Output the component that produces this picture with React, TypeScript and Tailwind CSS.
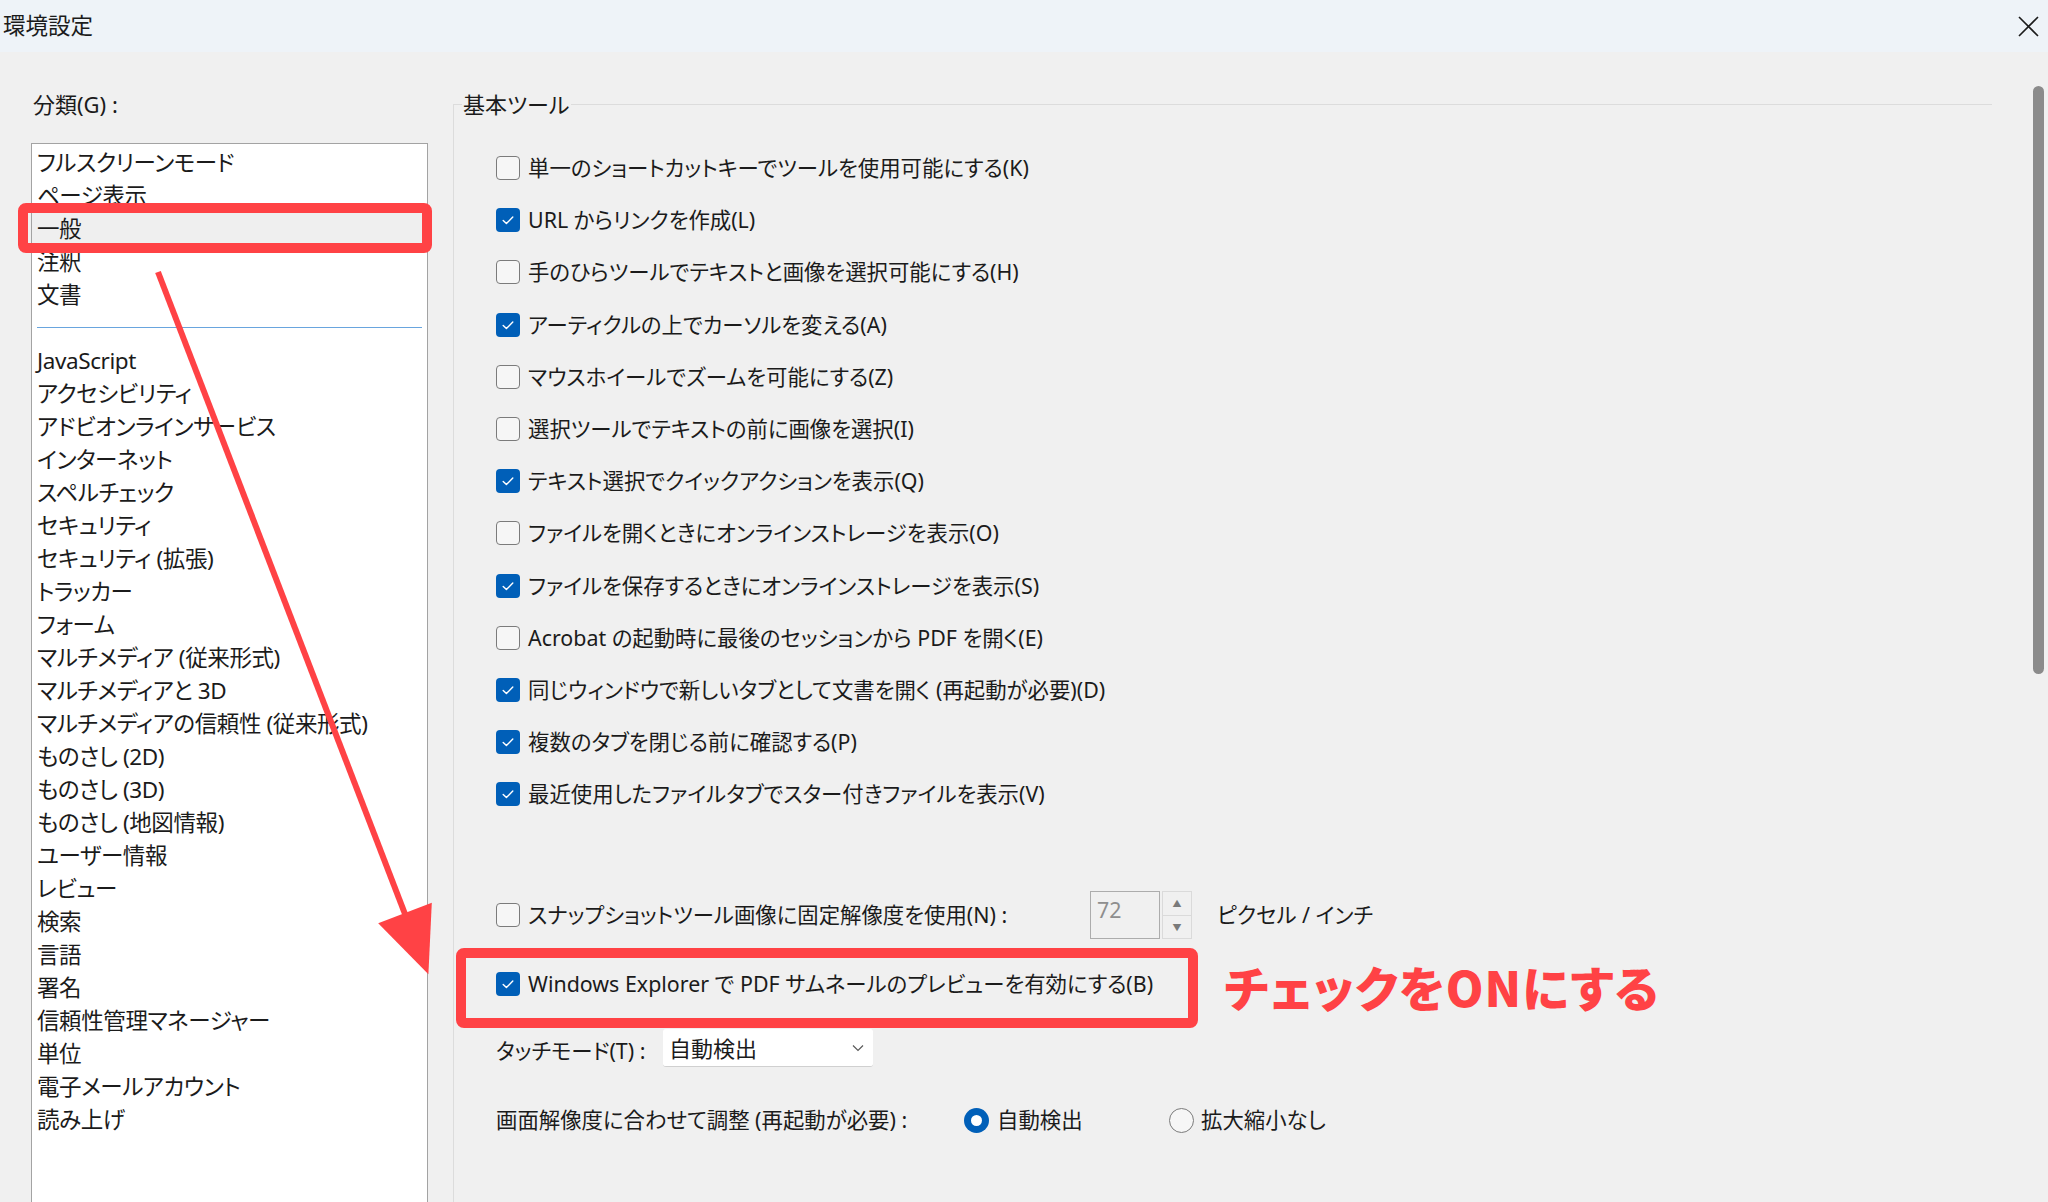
import React from 'react'

const topItems = ['フルスクリーンモード', 'ページ表示', '一般', '注釈', '文書']
const bottomItems = [
  'JavaScript',
  'アクセシビリティ',
  'アドビオンラインサービス',
  'インターネット',
  'スペルチェック',
  'セキュリティ',
  'セキュリティ (拡張)',
  'トラッカー',
  'フォーム',
  'マルチメディア (従来形式)',
  'マルチメディアと 3D',
  'マルチメディアの信頼性 (従来形式)',
  'ものさし (2D)',
  'ものさし (3D)',
  'ものさし (地図情報)',
  'ユーザー情報',
  'レビュー',
  '検索',
  '言語',
  '署名',
  '信頼性管理マネージャー',
  '単位',
  '電子メールアカウント',
  '読み上げ',
]

const options: { label: string; checked: boolean }[] = [
  { label: '単一のショートカットキーでツールを使用可能にする(K)', checked: false },
  { label: 'URL からリンクを作成(L)', checked: true },
  { label: '手のひらツールでテキストと画像を選択可能にする(H)', checked: false },
  { label: 'アーティクルの上でカーソルを変える(A)', checked: true },
  { label: 'マウスホイールでズームを可能にする(Z)', checked: false },
  { label: '選択ツールでテキストの前に画像を選択(I)', checked: false },
  { label: 'テキスト選択でクイックアクションを表示(Q)', checked: true },
  { label: 'ファイルを開くときにオンラインストレージを表示(O)', checked: false },
  { label: 'ファイルを保存するときにオンラインストレージを表示(S)', checked: true },
  { label: 'Acrobat の起動時に最後のセッションから PDF を開く(E)', checked: false },
  { label: '同じウィンドウで新しいタブとして文書を開く (再起動が必要)(D)', checked: true },
  { label: '複数のタブを閉じる前に確認する(P)', checked: true },
  { label: '最近使用したファイルタブでスター付きファイルを表示(V)', checked: true },
]

function CheckBox({ checked }: { checked: boolean }) {
  if (checked) {
    return (
      <span className="flex h-[24px] w-[24px] shrink-0 items-center justify-center rounded-[4px] bg-[#005fb8]">
        <svg width="24" height="24" viewBox="0 0 24 24" fill="none">
          <path d="M7.2 12.4 L10.4 15.6 L16.8 9" stroke="#ffffff" strokeWidth="1.4" strokeLinecap="round" strokeLinejoin="round" />
        </svg>
      </span>
    )
  }
  return <span className="block h-[24px] w-[24px] shrink-0 rounded-[4px] border-[1.5px] border-[#7b7b7b] bg-[#f6f6f6]" />
}

function Radio({ checked }: { checked: boolean }) {
  if (checked) {
    return (
      <span className="flex h-[25px] w-[25px] shrink-0 items-center justify-center rounded-full bg-[#005fb8]">
        <span className="block h-[11px] w-[11px] rounded-full bg-white" />
      </span>
    )
  }
  return <span className="block h-[25px] w-[25px] shrink-0 rounded-full border-[1.5px] border-[#7b7b7b] bg-[#f6f6f6]" />
}

function CheckRow({ label, checked }: { label: string; checked: boolean }) {
  return (
    <div className="flex h-[52.2px] items-center">
      <CheckBox checked={checked} />
      <span className="ml-[8px] whitespace-nowrap">{label}</span>
    </div>
  )
}

export default function App() {
  return (
    <div className="relative h-[1202px] w-[2048px] overflow-hidden bg-[#f0f0f0] font-['Noto_Sans','Noto_Sans_CJK_JP',sans-serif] text-[22px] leading-[28px] text-[#1b1b1b] [font-feature-settings:'palt']">
      {/* title bar */}
      <div className="flex h-[52px] items-center justify-between bg-[#eef3f8]">
        <span className="ml-[3px] text-[22.5px]">環境設定</span>
        <svg className="mr-[9px]" width="21" height="21" viewBox="0 0 21 21">
          <path d="M1 1 L20 20 M20 1 L1 20" stroke="#1b1b1b" strokeWidth="1.6" />
        </svg>
      </div>

      <div className="flex h-[1150px] pl-[31px] pt-[38px]">
        {/* category list */}
        <div className="flex w-[397px] flex-col">
          <div className="ml-[2px] h-[28px]">分類(G) :</div>
          <div className="mt-[25px] flex-1 border-x border-t border-[#a3a3a3] bg-white pt-[2px] text-[22.5px] tracking-[-0.4px]">
            {topItems.map(item => (
              <div key={item} className={`h-[33px] pl-[5px] leading-[33px] ${item === '一般' ? 'bg-[#efefef]' : ''}`}>
                {item}
              </div>
            ))}
            <div className="flex h-[33px] items-center px-[5px]">
              <div className="h-px w-full bg-[#69a5de]" />
            </div>
            {bottomItems.map(item => (
              <div key={item} className="h-[33px] pl-[5px] leading-[33px]">
                {item}
              </div>
            ))}
          </div>
        </div>

        {/* basic tools group */}
        <fieldset className="ml-[25px] w-[1539px] border-l border-t border-[#dcdcdc] pl-[8px]">
          <legend className="px-[1px] leading-[28px]">基本ツール</legend>
          <div className="pl-[34px] pt-[24px] text-[21.4px]">
            {options.map(o => (
              <CheckRow key={o.label} label={o.label} checked={o.checked} />
            ))}

            <div className="mt-[69px] flex h-[52px] items-center">
              <div className="flex w-[594px] items-center">
                <CheckBox checked={false} />
                <span className="ml-[8px] whitespace-nowrap">スナップショットツール画像に固定解像度を使用(N) :</span>
              </div>
              <div className="flex h-[48px] w-[70px] items-start border border-[#acacac] pl-[6px] pt-[4px] text-[#8e8e8e]">72</div>
              <div className="ml-[2px] flex h-[48px] w-[30px] flex-col">
                <div className="flex flex-1 items-center justify-center border border-[#dadada] text-[9px] leading-none text-[#7a7a7a]">▲</div>
                <div className="flex flex-1 items-center justify-center border border-t-0 border-[#dadada] text-[9px] leading-none text-[#7a7a7a]">▼</div>
              </div>
              <span className="ml-[25px]">ピクセル / インチ</span>
            </div>

            <div className="mt-[17px] flex h-[52px] items-center">
              <CheckBox checked={true} />
              <span className="ml-[8px] whitespace-nowrap">Windows Explorer で PDF サムネールのプレビューを有効にする(B)</span>
            </div>

            <div className="mt-[12px] flex h-[52px] items-center">
              <span className="w-[167px] whitespace-nowrap pt-[6px]">タッチモード(T) :</span>
              <div className="flex h-[38px] w-[210px] items-center justify-between rounded-[3px] border-b border-[#d0d0d0] bg-white pl-[6px] pr-[9px]">
                <span className="text-[22px]">自動検出</span>
                <svg width="12" height="8" viewBox="0 0 12 8" fill="none">
                  <path d="M1 1.5 L6 6.5 L11 1.5" stroke="#5a5a5a" strokeWidth="1.2" />
                </svg>
              </div>
            </div>

            <div className="mt-[20px] flex h-[52px] items-center">
              <span className="w-[468px] whitespace-nowrap">画面解像度に合わせて調整 (再起動が必要) :</span>
              <Radio checked={true} />
              <span className="ml-[8px] w-[172px]">自動検出</span>
              <Radio checked={false} />
              <span className="ml-[7px]">拡大縮小なし</span>
            </div>
          </div>
        </fieldset>

        {/* scrollbar */}
        <div className="-mt-[4px] ml-[41px] h-[588px] w-[11px] rounded-full bg-[#8b8b8b]" />
      </div>

      {/* annotations */}
      <div className="pointer-events-none absolute left-[18px] top-[203px] h-[50px] w-[414px] rounded-[8px] border-[10px] border-[#ff4245]" />
      <div className="pointer-events-none absolute left-[456px] top-[948px] h-[80px] w-[742px] rounded-[8px] border-[10px] border-[#ff4245]" />
      <svg className="pointer-events-none absolute left-0 top-0" width="2048" height="1202" viewBox="0 0 2048 1202">
        <line x1="158" y1="272" x2="405" y2="914" stroke="#ff4245" strokeWidth="6" />
        <polygon points="428.4,974.3 431.8,902.7 378.2,923.3" fill="#ff4245" />
      </svg>
      <div className="pointer-events-none absolute left-[1224px] top-[958px] whitespace-nowrap font-['Noto_Sans_CJK_JP',sans-serif] text-[48px] font-black leading-[56px] tracking-[1px] text-[#ff4245]">
        チェックをONにする
      </div>
    </div>
  )
}
